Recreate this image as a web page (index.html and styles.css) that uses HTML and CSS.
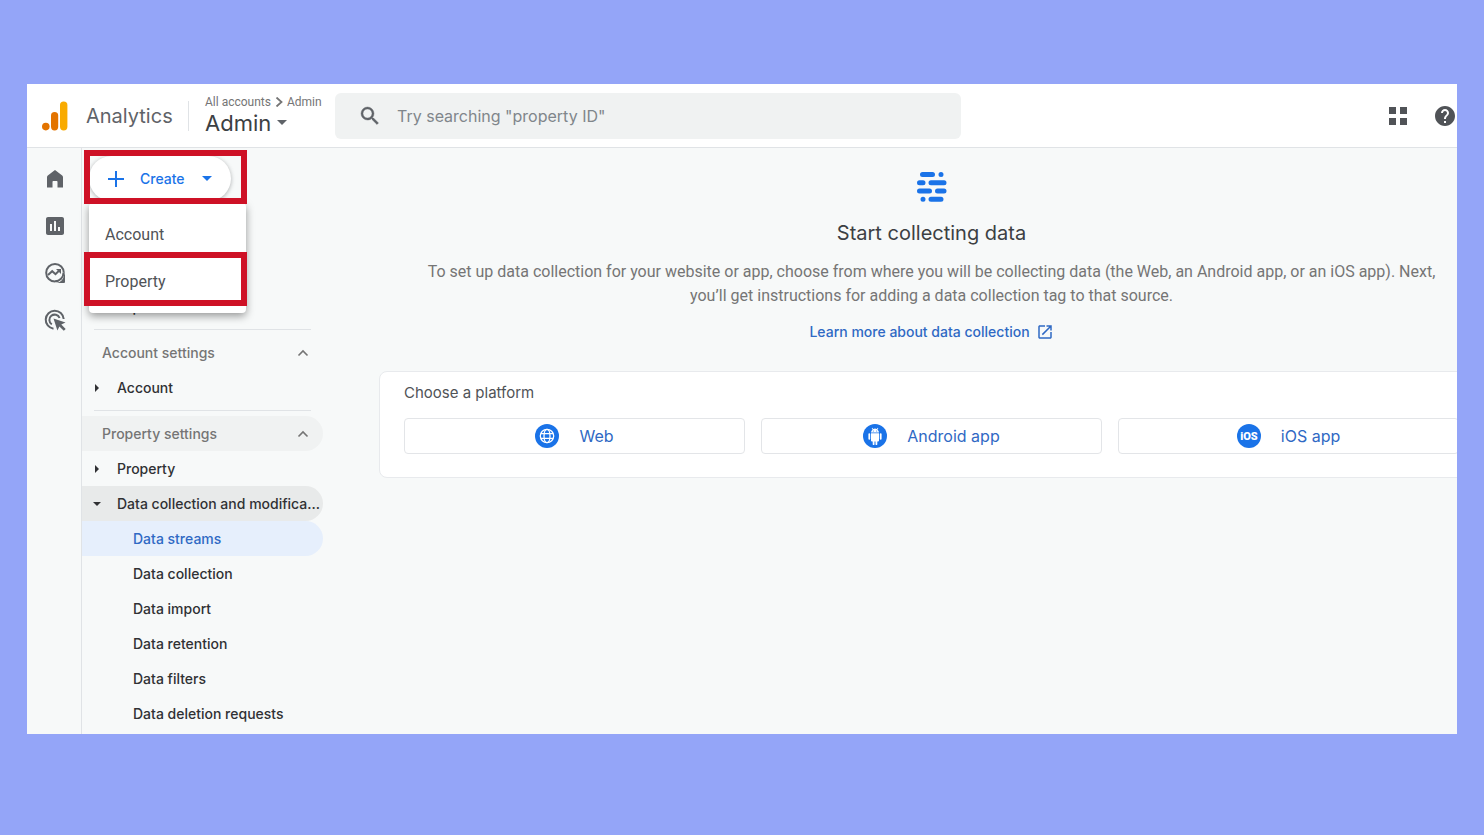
FILE: index.html
```html
<!DOCTYPE html>
<html lang="en">
<head>
    <meta charset="UTF-8">
    <meta name="viewport" content="width=device-width, initial-scale=1.0">
    <title>Analytics | Admin</title>
    <link rel="stylesheet" href="styles.css">
</head>
<body>
<div class="window">

    <!-- Top bar -->
    <header class="topbar">
        <svg class="logo" viewBox="0 0 26 30" aria-hidden="true">
            <circle cx="3.8" cy="25.6" r="3.8" fill="#e37400"/>
            <rect x="9" y="11" width="7.2" height="18.4" rx="3.6" fill="#e37400"/>
            <rect x="18" y="0.4" width="7.4" height="29" rx="3.7" fill="#f9ab00"/>
        </svg>
        <span class="brand">Analytics</span>
        <div class="account">
            <div class="crumbs">
                All accounts
                <svg width="8" height="10" viewBox="0 0 8 10" aria-hidden="true"><path d="M1.500 0.500l5 4.500-5 4.500" fill="none" stroke="currentColor" stroke-width="1.800"/></svg>
                Admin
            </div>
            <button class="switcher">Admin <span class="caret"></span></button>
        </div>
        <div class="search">
            <label for="search" aria-label="Search">
                <svg width="24" height="24" viewBox="0 0 24 24" fill="currentColor" stroke="currentColor" stroke-width=".4"><path d="M15.500 14h-.79l-.28-.27A6.470 6.470 0 0 0 16 9.500 6.500 6.500 0 1 0 9.500 16c1.610 0 3.090-.59 4.230-1.570l.27.28v.79l5 4.990L20.490 19l-4.990-5zm-6 0C7.010 14 5 11.990 5 9.500S7.010 5 9.500 5 14 7.010 14 9.500 11.990 14 9.500 14z"/></svg>
            </label>
            <input type="text" id="search" placeholder="Try searching &quot;property ID&quot;">
        </div>
        <div class="tools">
            <button class="icon" aria-label="Apps">
                <svg width="20" height="20" viewBox="0 0 20 20" fill="currentColor"><path d="M1 1h7v7H1zM12 1h7v7h-7zM1 12h7v7H1zM12 12h7v7h-7z"/></svg>
            </button>
            <button class="icon" aria-label="Help">
                <svg width="24" height="24" viewBox="0 0 24 24" fill="currentColor"><path d="M12 2C6.480 2 2 6.480 2 12s4.480 10 10 10 10-4.480 10-10S17.520 2 12 2zm1 17h-2v-2h2v2zm2.070-7.750l-.9.92C13.450 12.900 13 13.500 13 15h-2v-.5c0-1.100.45-2.100 1.170-2.830l1.240-1.260c.37-.36.59-.86.59-1.410 0-1.100-.9-2-2-2s-2 .9-2 2H8c0-2.210 1.790-4 4-4s4 1.790 4 4c0 .88-.36 1.680-.93 2.250z"/></svg>
            </button>
        </div>
    </header>

    <div class="body">

        <!-- Icon rail -->
        <nav class="rail" aria-label="Main">
            <a href="#" aria-label="Home">
                <svg viewBox="0 0 24 24" fill="currentColor"><path d="M4 20.500V10.200c0-.7.300-1.200.8-1.600L11 3.700c.6-.5 1.400-.5 2 0l6.200 4.900c.5.400.8.900.8 1.600v10.300h-5.500V15c0-.6-.4-1-1-1h-3c-.6 0-1 .4-1 1v5.500z"/></svg>
            </a>
            <a href="#" aria-label="Reports">
                <svg viewBox="0 0 24 24" fill="currentColor"><path d="M19 3H5c-1.100 0-2 .9-2 2v14c0 1.100.9 2 2 2h14c1.100 0 2-.9 2-2V5c0-1.100-.9-2-2-2zM9 17H7v-7h2v7zm4 0h-2V7h2v10zm4 0h-2v-4h2v4z"/></svg>
            </a>
            <a href="#" aria-label="Explore">
                <svg viewBox="0 0 24 24" fill="none" stroke="currentColor" stroke-width="2"><path d="M12 20.600a8.800 8.800 0 1 1 8.800-8.800"/><path d="M11.500 22c4 0 7-1.500 8.500-4.500L22 11v10a1 1 0 0 1-1 1z" fill="currentColor" stroke="none"/><path d="M12 20.300a8.500 8.500 0 0 0 8.500-8.500"/><path d="M5 14l4.200-3.800 3.300 3 4.500-4.500"/><path d="M13 8h5v5z" fill="currentColor" stroke="none"/></svg>
            </a>
            <a href="#" aria-label="Advertising">
                <svg viewBox="0 0 24 24" fill="none" stroke="currentColor" stroke-width="2"><path d="M10.500 20.700A9 9 0 1 1 20.700 11"/><path d="M8.800 16.400A5.300 5.300 0 1 1 16.600 10"/><path d="M10.500 10.500l12 4-4.200 2 4.400 4.400-1.900 1.900-4.400-4.400-2 4.200z" fill="currentColor" stroke="none"/></svg>
            </a>
        </nav>

        <!-- Admin navigation -->
        <aside class="sidebar">
            <div class="create">
                <button class="create-btn" aria-expanded="true">
                    <svg width="18" height="18" viewBox="0 0 18 18" aria-hidden="true"><path d="M9 1v16M1 9h16" stroke="currentColor" stroke-width="2"/></svg>
                    Create
                    <span class="caret"></span>
                </button>
                <div class="menu">
                    <button>Account</button>
                    <button class="marked">Property</button>
                </div>
                <span class="mark"></span>
            </div>

            <a class="row head" href="#">Setup Assistant</a>
            <hr>
            <button class="row head">Account settings
                <svg class="chevron" viewBox="0 0 12 8"><path d="M1.500 6.500L6 2l4.500 4.500" fill="none" stroke="currentColor" stroke-width="1.600"/></svg>
            </button>
            <button class="row group"><span class="tri"></span>Account</button>
            <hr>
            <button class="row head hovered">Property settings
                <svg class="chevron" viewBox="0 0 12 8"><path d="M1.500 6.500L6 2l4.500 4.500" fill="none" stroke="currentColor" stroke-width="1.600"/></svg>
            </button>
            <button class="row group"><span class="tri"></span>Property</button>
            <button class="row group open"><span class="tri down"></span>Data collection and modifica...</button>
            <ul class="sub">
                <li><a class="row active" href="#">Data streams</a></li>
                <li><a class="row" href="#">Data collection</a></li>
                <li><a class="row" href="#">Data import</a></li>
                <li><a class="row" href="#">Data retention</a></li>
                <li><a class="row" href="#">Data filters</a></li>
                <li><a class="row" href="#">Data deletion requests</a></li>
            </ul>
        </aside>

        <!-- Content -->
        <main class="content">
            <svg class="stream" viewBox="0 0 30 30" stroke="#1a73e8" stroke-width="5" stroke-linecap="round" aria-hidden="true">
                <path d="M5.500 2.500h10M24 2.500h.01M2.500 10.800h3.500M14 10.800h13M2.500 19h10M20.500 19h6.500M6 27.300h.01M14 27.300h10"/>
            </svg>
            <h1>Start collecting data</h1>
            <p>To set up data collection for your website or app, choose from where you will be collecting data (the Web, an Android app, or an iOS app). Next, you’ll get instructions for adding a data collection tag to that source.</p>
            <a class="more" href="#">Learn more about data collection
                <svg width="18" height="18" viewBox="0 0 24 24" fill="currentColor" aria-hidden="true"><path d="M19 19H5V5h7V3H5c-1.110 0-2 .9-2 2v14c0 1.100.89 2 2 2h14c1.100 0 2-.9 2-2v-7h-2v7zM14 3v2h3.590l-9.830 9.830 1.410 1.410L19 6.410V10h2V3h-7z"/></svg>
            </a>

            <section class="card">
                <h2>Choose a platform</h2>
                <div class="platforms">
                    <button>
                        <svg viewBox="0 0 24 24" aria-hidden="true"><circle cx="12" cy="12" r="12" fill="#1a73e8"/><g fill="none" stroke="#fff" stroke-width="1.300"><circle cx="12" cy="12" r="6.700"/><ellipse cx="12" cy="12" rx="3" ry="6.700"/><path d="M6 9.700h12M6 14.300h12"/></g></svg>
                        Web
                    </button>
                    <button>
                        <svg viewBox="0 0 24 24" aria-hidden="true"><circle cx="12" cy="12" r="12" fill="#1a73e8"/><g fill="#fff"><path d="M8 8.600a4 4 0 0 1 1.600-3.200L8.700 4.200l.5-.4 1 1.200a4.200 4.200 0 0 1 3.600 0l1-1.200.5.400-.9 1.200A4 4 0 0 1 16 8.600z"/><path d="M8 9.300h8v7.200a1 1 0 0 1-1 1h-.7v2.700a.9.900 0 0 1-1.800 0v-2.700h-1v2.700a.9.900 0 0 1-1.800 0v-2.700H9a1 1 0 0 1-1-1z"/><rect x="5.400" y="9.200" width="1.800" height="6.500" rx=".9"/><rect x="16.800" y="9.200" width="1.800" height="6.500" rx=".9"/></g><circle cx="10.300" cy="7" r=".5" fill="#1a73e8"/><circle cx="13.700" cy="7" r=".5" fill="#1a73e8"/></svg>
                        Android app
                    </button>
                    <button>
                        <svg viewBox="0 0 24 24" aria-hidden="true"><circle cx="12" cy="12" r="12" fill="#1a73e8"/><text class="ios" x="12" y="16" text-anchor="middle">iOS</text></svg>
                        iOS app
                    </button>
                </div>
            </section>
        </main>
    </div>
</div>
</body>
</html>
```
FILE: styles.css
```css
*, *::after {
    box-sizing: border-box;
    margin: 0;
    padding: 0;
}
body {
    display: flex;
    flex-direction: column;
    min-height: 100vh;
    padding: 84px 27px 101px;
    background: #94a5f8;
    color: #3c4043;
    font-family: Inter, "Open Sans", sans-serif;
    font-size: 14px;
}
button, input {
    font: inherit;
    color: inherit;
    background: none;
    border: none;
}
button {
    cursor: pointer;
}
a {
    color: inherit;
    text-decoration: none;
}
.window {
    flex: 1;
    display: flex;
    flex-direction: column;
    overflow: hidden;
    background: #f7f9f9;
}

/* top bar */
.topbar {
    display: flex;
    align-items: center;
    height: 64px;
    padding-left: 15px;
    background: #fff;
    border-bottom: 1px solid #e0e3e6;
}
.logo {
    width: 26px;
    height: 30px;
    margin-right: 18px;
}
.brand {
    width: 103px;
    border-right: 1px solid #e0e3e6;
    font-size: 20px;
    line-height: 30px;
    color: #5f6368;
}
.account {
    width: 146px;
    padding-left: 16px;
}
.crumbs {
    display: flex;
    align-items: center;
    gap: 4px;
    font-family: Roboto, sans-serif;
    font-size: 12px;
    line-height: 14px;
    color: #757575;
    white-space: nowrap;
}
.switcher {
    display: flex;
    align-items: center;
    gap: 6px;
    font-size: 22px;
    line-height: 28px;
    color: #3c4043;
}
.caret {
    border: 5px solid transparent;
    border-top-color: currentColor;
    border-bottom: none;
}
.switcher .caret {
    color: #5f6368;
}
.search {
    display: flex;
    align-items: center;
    flex: 0 1 626px;
    height: 46px;
    padding-left: 23px;
    gap: 15px;
    background: #f0f2f2;
    border-radius: 6px;
}
.search label {
    height: 24px;
    color: #5f6368;
}
.search input {
    flex: 1;
    font-size: 16px;
    outline: none;
}
.search input::placeholder {
    color: #80868b;
}
.tools {
    display: flex;
    align-items: center;
    gap: 25px;
    margin-left: auto;
}
.icon {
    display: flex;
    color: #505357;
}

/* rail */
.body {
    flex: 1;
    display: flex;
}
.rail {
    display: flex;
    flex-direction: column;
    gap: 23px;
    width: 55px;
    padding: 19px 0 0 16px;
    border-right: 1px solid #e0e3e6;
    color: #5f6368;
}
.rail a {
    height: 24px;
}
.rail svg {
    width: 24px;
    height: 24px;
}

/* sidebar */
.sidebar {
    width: 241px;
    font-weight: 500;
}
.create {
    position: relative;
    height: 141px;
    padding: 8px 7px;
}
.create-btn {
    display: flex;
    align-items: center;
    gap: 15px;
    width: 142px;
    height: 45px;
    padding-left: 18px;
    background: #fff;
    border-radius: 23px;
    box-shadow: 0 1px 4px rgba(60, 64, 67, 0.4);
    color: #1a73e8;
}
.create-btn .caret {
    margin-left: 2px;
}
.menu {
    position: absolute;
    top: 55px;
    left: 7px;
    width: 157px;
    padding: 8px 0;
    background: #fff;
    border-radius: 4px;
    box-shadow: 0 3px 8px rgba(0, 0, 0, 0.4);
    font-family: Roboto, sans-serif;
    font-size: 16px;
    font-weight: 400;
    color: #505357;
}
.menu button {
    position: relative;
    display: block;
    width: 100%;
    height: 47px;
    padding-left: 16px;
    text-align: left;
}

/* red frames around the highlighted controls */
.mark, .marked::after {
    content: "";
    position: absolute;
    width: 163px;
    height: 54px;
    border: 6px solid #ce1126;
}
.mark {
    top: 2px;
    left: 2px;
}
.marked::after {
    top: -6px;
    left: -5px;
}
hr {
    margin: 5px 12px;
    border: none;
    border-top: 1px solid #e0e3e6;
}
.row {
    display: flex;
    align-items: center;
    width: 100%;
    height: 35px;
    border-radius: 0 18px 18px 0;
    text-align: left;
    white-space: nowrap;
    color: #303134;
}
.head {
    padding: 0 14px 0 20px;
    color: #757575;
}
a.head {
    color: #303134;
}
.chevron {
    width: 12px;
    height: 8px;
    margin-left: auto;
}
.hovered {
    background: #f0f2f2;
}
.group {
    padding-left: 13px;
}
.tri {
    flex: none;
    width: 4px;
    margin-right: 18px;
    border: 4px solid transparent;
    border-left-color: currentColor;
    border-right: none;
}
.tri.down {
    width: 8px;
    margin: 0 16px 0 -2px;
    border: 4px solid transparent;
    border-top-color: currentColor;
    border-bottom: none;
}
.open {
    background: #e8eaea;
}
.sub {
    list-style: none;
}
.sub .row {
    padding-left: 51px;
}
.sub .active {
    background: #e6effc;
    color: #2f69c4;
}

/* content, runs past the right edge of the window */
.content {
    flex: 1;
    display: flex;
    flex-direction: column;
    align-items: center;
    margin: 0 -27px 0 56px;
    padding-top: 24px;
}
.stream {
    width: 30px;
    height: 30px;
}
h1 {
    margin-top: 18px;
    font-size: 20px;
    font-weight: 400;
    line-height: 26px;
}
.content p {
    max-width: 1040px;
    margin-top: 14px;
    font-family: Roboto, sans-serif;
    font-size: 16px;
    line-height: 24px;
    text-align: center;
    color: #757575;
}
.more {
    display: flex;
    align-items: center;
    gap: 6px;
    margin-top: 14px;
    line-height: 20px;
    font-weight: 500;
    color: #2f69c4;
}
.card {
    width: 100%;
    margin-top: 29px;
    padding: 11px 24px 23px;
    background: #fff;
    border: 1px solid #e8eaed;
    border-radius: 8px;
}
h2 {
    font-size: 15px;
    font-weight: 400;
    line-height: 20px;
    color: #505357;
}
.platforms {
    display: grid;
    grid-template-columns: repeat(3, 1fr);
    gap: 16px;
    margin-top: 15px;
}
.platforms button {
    display: flex;
    align-items: center;
    justify-content: center;
    gap: 20px;
    height: 36px;
    border: 1px solid #e3e5e8;
    border-radius: 4px;
    font-size: 16px;
    color: #2f69c4;
}
.platforms svg {
    width: 24px;
    height: 24px;
}
.ios {
    fill: #fff;
    font-family: Roboto, sans-serif;
    font-size: 11px;
    font-weight: 900;
}
```
